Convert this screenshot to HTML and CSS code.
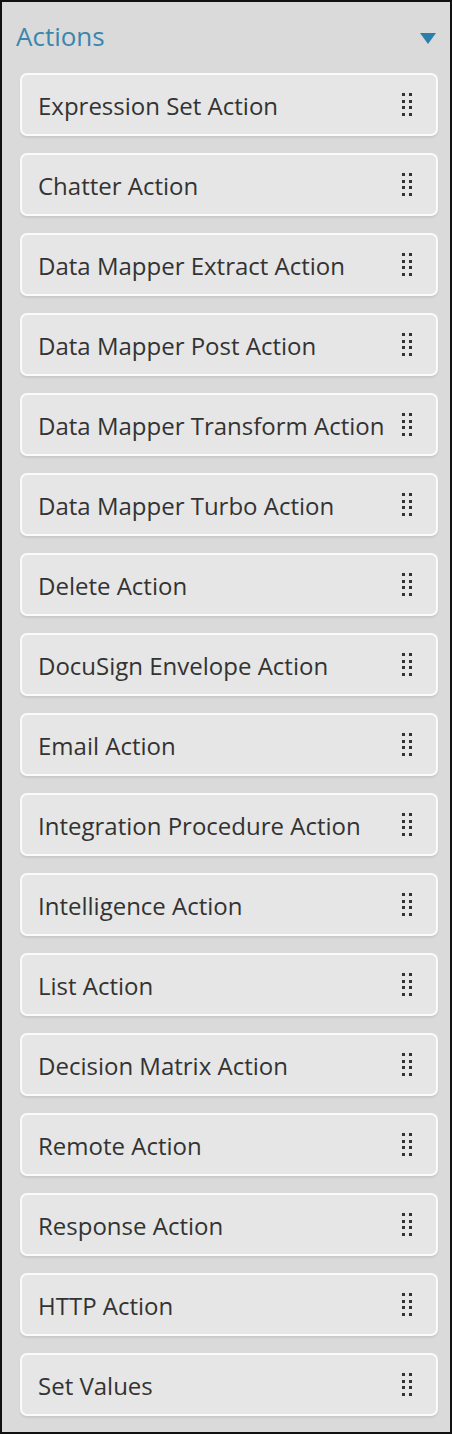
FILE: index.html
```html
<!DOCTYPE html>
<html>
<head>
<meta charset="utf-8">
<link rel="stylesheet" href="styles.css">
</head>
<body>
<div class="panel">
  <div class="header">
    <span class="title">Actions</span>
    <svg class="caret" width="16" height="12" viewBox="0 0 16 12"><polygon points="0,0 16,0 8,11" fill="#2b7fad"/></svg>
  </div>
  <div class="list">
    <div class="card"><span class="label">Expression Set Action</span><span class="grip"><i></i><i></i><i></i><i></i><i></i><i></i><i></i><i></i></span></div>
    <div class="card"><span class="label">Chatter Action</span><span class="grip"><i></i><i></i><i></i><i></i><i></i><i></i><i></i><i></i></span></div>
    <div class="card"><span class="label">Data Mapper Extract Action</span><span class="grip"><i></i><i></i><i></i><i></i><i></i><i></i><i></i><i></i></span></div>
    <div class="card"><span class="label">Data Mapper Post Action</span><span class="grip"><i></i><i></i><i></i><i></i><i></i><i></i><i></i><i></i></span></div>
    <div class="card"><span class="label">Data Mapper Transform Action</span><span class="grip"><i></i><i></i><i></i><i></i><i></i><i></i><i></i><i></i></span></div>
    <div class="card"><span class="label">Data Mapper Turbo Action</span><span class="grip"><i></i><i></i><i></i><i></i><i></i><i></i><i></i><i></i></span></div>
    <div class="card"><span class="label">Delete Action</span><span class="grip"><i></i><i></i><i></i><i></i><i></i><i></i><i></i><i></i></span></div>
    <div class="card"><span class="label">DocuSign Envelope Action</span><span class="grip"><i></i><i></i><i></i><i></i><i></i><i></i><i></i><i></i></span></div>
    <div class="card"><span class="label">Email Action</span><span class="grip"><i></i><i></i><i></i><i></i><i></i><i></i><i></i><i></i></span></div>
    <div class="card"><span class="label">Integration Procedure Action</span><span class="grip"><i></i><i></i><i></i><i></i><i></i><i></i><i></i><i></i></span></div>
    <div class="card"><span class="label">Intelligence Action</span><span class="grip"><i></i><i></i><i></i><i></i><i></i><i></i><i></i><i></i></span></div>
    <div class="card"><span class="label">List Action</span><span class="grip"><i></i><i></i><i></i><i></i><i></i><i></i><i></i><i></i></span></div>
    <div class="card"><span class="label">Decision Matrix Action</span><span class="grip"><i></i><i></i><i></i><i></i><i></i><i></i><i></i><i></i></span></div>
    <div class="card"><span class="label">Remote Action</span><span class="grip"><i></i><i></i><i></i><i></i><i></i><i></i><i></i><i></i></span></div>
    <div class="card"><span class="label">Response Action</span><span class="grip"><i></i><i></i><i></i><i></i><i></i><i></i><i></i><i></i></span></div>
    <div class="card"><span class="label">HTTP Action</span><span class="grip"><i></i><i></i><i></i><i></i><i></i><i></i><i></i><i></i></span></div>
    <div class="card"><span class="label">Set Values</span><span class="grip"><i></i><i></i><i></i><i></i><i></i><i></i><i></i><i></i></span></div>
  </div>
</div>
</body>
</html>
```
FILE: styles.css
```css
html, body {
  margin: 0;
  padding: 0;
  background: #dadada;
}
.panel {
  box-sizing: border-box;
  width: 452px;
  height: 1434px;
  border: 2px solid #111;
  background: #dadada;
  font-family: "Open Sans", Lato, sans-serif;
  display: flex;
  flex-direction: column;
  gap: 17px;
  padding: 18px 12px 0 18px;
}
.header {
  display: flex;
  align-items: center;
  justify-content: space-between;
  height: 36px;
  margin-left: -4px;
  padding-right: 2px;
}
.title {
  font-size: 26px;
  color: #3a86ad;
  line-height: 36px;
  position: relative;
  top: -2px;
}
.caret {
  display: block;
  margin-top: 2px;
}
.list {
  display: flex;
  flex-direction: column;
  gap: 17px;
}
.card {
  box-sizing: border-box;
  height: 63px;
  border: 2px solid #fbfbfb;
  border-radius: 7px;
  background: #e6e6e6;
  box-shadow: 0 2px 2px rgba(0, 0, 0, 0.08);
  display: flex;
  align-items: center;
  justify-content: space-between;
  padding: 0 24px 0 16px;
}
.label {
  font-size: 24px;
  line-height: 30px;
  padding-top: 2px;
  color: #333;
  white-space: nowrap;
}
.grip {
  display: grid;
  grid-template-columns: 3px 3px;
  grid-auto-rows: 3px;
  column-gap: 4px;
  row-gap: 3.5px;
  flex-shrink: 0;
}
.grip i {
  display: block;
  width: 3px;
  height: 3px;
  background: #333;
}
```
